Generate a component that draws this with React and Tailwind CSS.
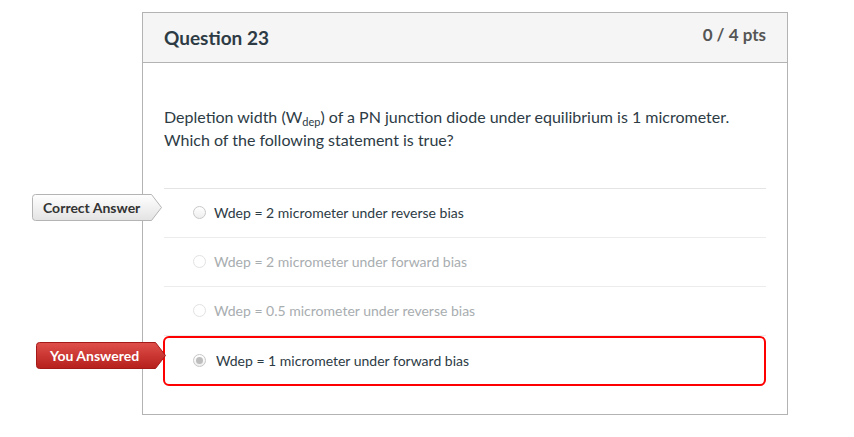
import React from "react";

const answers = [
  { text: "Wdep = 2 micrometer under reverse bias", faded: false, label: "correct" },
  { text: "Wdep = 2 micrometer under forward bias", faded: true },
  { text: "Wdep = 0.5 micrometer under reverse bias", faded: true },
];

const Tag = ({ kind }) => {
  const red = kind === "answered";
  return (
    <div
      className={`absolute h-[27px] w-[131px] ${red ? "top-[4px] -left-[129px]" : "top-[5px] -left-[132px]"}`}
    >
      <svg className="absolute inset-0" width="131" height="27" viewBox="0 0 131 27">
        <defs>
          <linearGradient id={`g-${kind}`} x1="0" y1="0" x2="0" y2="1">
            {red ? (
              <>
                <stop offset="0" stopColor="#e0504b" />
                <stop offset="1" stopColor="#b51f1c" />
              </>
            ) : (
              <>
                <stop offset="0" stopColor="#ffffff" />
                <stop offset="1" stopColor="#e3e3e3" />
              </>
            )}
          </linearGradient>
        </defs>
        <path
          d="M3.5 0.5 H119.5 L129.5 13.5 L119.5 26.5 H3.5 Q0.5 26.5 0.5 23.5 V3.5 Q0.5 0.5 3.5 0.5 Z"
          fill={`url(#g-${kind})`}
          stroke={red ? "#a31a18" : "#b4b4b4"}
        />
      </svg>
      <span
        className={`relative flex h-full items-center pl-[11px] text-[14px] font-bold ${
          red ? "pl-[14px] text-white" : "text-[#333]"
        }`}
      >
        {red ? "You Answered" : "Correct Answer"}
      </span>
    </div>
  );
};

const Radio = ({ checked, faded }) => (
  <span
    className={`inline-flex h-[13px] w-[13px] items-center justify-center rounded-full border ${
      faded ? "border-[#e2e2e2] bg-white" : "border-[#c8c8c8] bg-gradient-to-b from-white to-[#eeeeee]"
    }`}
  >
    {checked && <span className="h-[7px] w-[7px] rounded-full bg-[#bdbdbd]" />}
  </span>
);

export default function App() {
  return (
    <div className="min-h-[437px] w-[854px] bg-white pt-[12px] font-['Lato',sans-serif]">
      <div className="ml-[142px] h-[403px] w-[646px] border border-[#b3b3b3]">
        <div className="flex h-[50px] items-start justify-between border-b border-[#b3b3b3] bg-[#f5f5f5] px-[21px]">
          <h2 className="mt-[11px] text-[19px] font-bold text-[#2d3b45]">Question 23</h2>
          <span className="mt-[9px] text-[17px] font-bold text-[#555]">0 / 4 pts</span>
        </div>
        <div className="px-[21px] pt-[42px]">
          <p className="text-[16px] leading-[23px] text-[#2d3b45]">
            Depletion width (W<sub className="text-[11px]">dep</sub>) of a PN junction diode under
            equilibrium is 1 micrometer.
            <br />
            Which of the following statement is true?
          </p>
          <div className="mt-[37px] border-t border-[#e4e4e4]">
            {answers.map((a, i) => (
              <div
                key={i}
                className="relative flex h-[49px] items-center gap-[8px] border-b border-[#ececec] pb-[2px] pl-[29px] text-[14px]"
              >
                {a.label && <Tag kind="correct" />}
                <Radio faded={a.faded} />
                <span className={a.faded ? "text-[#a8adb0]" : "text-[#2d3b45]"}>{a.text}</span>
              </div>
            ))}
            <div className="relative -ml-[1px] flex h-[50px] items-center gap-[10px] rounded-[6px] border-2 border-[#f00] pb-[2px] pl-[28px] text-[14px]">
              <Tag kind="answered" />
              <Radio checked />
              <span className="text-[#2d3b45]">Wdep = 1 micrometer under forward bias</span>
            </div>
          </div>
        </div>
      </div>
    </div>
  );
}
